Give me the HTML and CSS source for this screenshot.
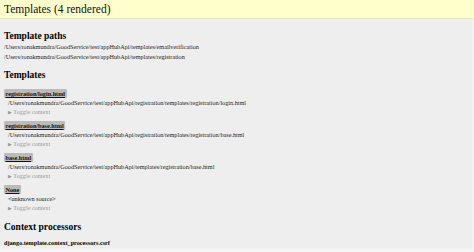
FILE: index.html
```html
<!DOCTYPE html>
<html>
<head>
<meta charset="utf-8">
<link rel="stylesheet" href="styles.css">
</head>
<body>
<div class="panel">
  <div class="panel-title">Templates (4 rendered)</div>
  <div class="panel-content">
    <h4 class="section first">Template paths</h4>
    <div class="paths">
      <div>/Users/ronakmundra/GoodService/test/appHubApi/templates/emailverification</div>
      <div>/Users/ronakmundra/GoodService/test/appHubApi/templates/registration</div>
    </div>
    <h4 class="section second">Templates</h4>
    <dl class="templates">
      <dt><a class="tpl">registration/login.html</a></dt>
      <dd>
        <div class="line">/Users/ronakmundra/GoodService/test/appHubApi/registration/templates/registration/login.html</div>
        <div class="line toggle"><span class="arrow">&#9654;</span> Toggle context</div>
      </dd>
      <dt><a class="tpl">registration/base.html</a></dt>
      <dd>
        <div class="line">/Users/ronakmundra/GoodService/test/appHubApi/registration/templates/registration/base.html</div>
        <div class="line toggle"><span class="arrow">&#9654;</span> Toggle context</div>
      </dd>
      <dt><a class="tpl">base.html</a></dt>
      <dd>
        <div class="line">/Users/ronakmundra/GoodService/test/appHubApi/templates/registration/base.html</div>
        <div class="line toggle"><span class="arrow">&#9654;</span> Toggle context</div>
      </dd>
      <dt><a class="tpl">None</a></dt>
      <dd>
        <div class="line">&lt;unknown source&gt;</div>
        <div class="line toggle"><span class="arrow">&#9654;</span> Toggle context</div>
      </dd>
    </dl>
    <h4 class="section third">Context processors</h4>
    <div class="processor">django.template.context_processors.csrf</div>
  </div>
  <div class="strip"><span class="toggle"><span class="arrow">&#9654;</span> Toggle context</span></div>
</div>
</body>
</html>
```

FILE: styles.css
```css
html, body {
  margin: 0;
  padding: 0;
  background: #eeeeee;
  font-family: "Liberation Serif", "Times New Roman", serif;
  color: #000;
  height: 100%;
  overflow: hidden;
}

.panel {
  display: flex;
  flex-direction: column;
  min-height: 100%;
  border-right: 1px solid #f8f8f8;
  box-sizing: border-box;
}

.panel-title {
  background: #ffffcc;
  height: 18px;
  line-height: 18px;
  font-size: 11.5px;
  padding-left: 4px;
  border-bottom: 1px solid #e6e4c4;
  color: #111;
}

.panel-content {
  padding-left: 4px;
}

.section {
  margin: 0;
  font-size: 9.5px;
  line-height: 11px;
  font-weight: bold;
}

.section.first {
  margin-top: 11.5px;
}

.section.second {
  margin-top: 7.5px;
}

.section.third {
  margin-top: 9.5px;
}

.paths {
  margin-top: 0.5px;
  font-size: 6.2px;
  line-height: 10px;
  color: #222;
}

.templates {
  margin: 8.5px 0 0 0;
  font-size: 6.2px;
  line-height: 9px;
}

.templates dt {
  display: flex;
  height: 9px;
  margin: 0;
  font-size: 6.2px;
  line-height: 9px;
}

.tpl {
  display: block;
  height: 9px;
  line-height: 9px;
  padding: 0 1.5px;
  background: #bbbbbb;
  border-radius: 1px;
  font-size: 6.2px;
  font-weight: bold;
  color: #111;
  text-decoration: underline;
}

.templates dd {
  margin: 0 0 5px 4px;
}

.templates dd:last-child {
  margin-bottom: 0;
}

.line {
  font-size: 6.2px;
  line-height: 9px;
  height: 9px;
  color: #222;
  white-space: nowrap;
}

.toggle {
  color: #9a9a9a;
}

.arrow {
  font-family: "DejaVu Sans", sans-serif;
  font-size: 5px;
}

.processor {
  margin-top: 5.5px;
  font-size: 6.2px;
  line-height: 9.5px;
  font-weight: bold;
}

.strip {
  margin-top: 1px;
  background: #f5f5f5;
  height: 12px;
  padding-left: 8px;
  font-size: 6.2px;
  line-height: 9px;
}
```
